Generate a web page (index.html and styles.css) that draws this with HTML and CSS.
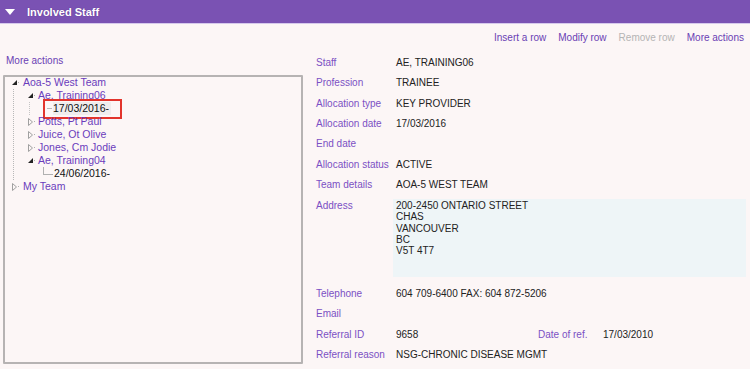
FILE: index.html
```html
<!DOCTYPE html>
<html>
<head>
<meta charset="utf-8">
<link rel="stylesheet" href="styles.css">
</head>
<body>
<div class="panel">
  <div class="hdr">
    <svg class="caret" width="10" height="6" viewBox="0 0 10 6"><path d="M0 0 H10 L5 6 Z" fill="#fff"/></svg>
    <span class="title">Involved Staff</span>
  </div>
  <div class="toolbar">
    <a>Insert a row</a>
    <a>Modify row</a>
    <a class="dis">Remove row</a>
    <a>More actions</a>
  </div>
  <div class="main">
    <div class="left">
      <a class="more">More actions</a>
      <div class="treebox">
        <div class="node n0">
          <svg class="tw" width="5" height="5" viewBox="0 0 5 5"><path d="M5 0 V5 H0 Z" fill="#222"/></svg><span class="dot"></span><a class="lbl">Aoa-5 West Team</a>
        </div>
        <div class="kids k0">
          <div class="node n1">
            <svg class="tw" width="5" height="5" viewBox="0 0 5 5"><path d="M5 0 V5 H0 Z" fill="#222"/></svg><span class="dot"></span><a class="lbl">Ae, Training06</a>
          </div>
          <div class="kids k1">
            <div class="node n2a">
              <span class="sel"><span class="dash"></span><span class="date">17/03/2016-</span></span>
            </div>
          </div>
          <div class="node n1">
            <svg class="tw" width="5" height="8" viewBox="0 0 5 8"><path d="M0.5 0.5 L4.5 4 L0.5 7.5 Z" fill="none" stroke="#a0a0a0"/></svg><span class="dot"></span><a class="lbl">Potts, Pt Paul</a>
          </div>
          <div class="node n1">
            <svg class="tw" width="5" height="8" viewBox="0 0 5 8"><path d="M0.5 0.5 L4.5 4 L0.5 7.5 Z" fill="none" stroke="#a0a0a0"/></svg><span class="dot"></span><a class="lbl">Juice, Ot Olive</a>
          </div>
          <div class="node n1">
            <svg class="tw" width="5" height="8" viewBox="0 0 5 8"><path d="M0.5 0.5 L4.5 4 L0.5 7.5 Z" fill="none" stroke="#a0a0a0"/></svg><span class="dot"></span><a class="lbl">Jones, Cm Jodie</a>
          </div>
          <div class="node n1">
            <svg class="tw" width="5" height="5" viewBox="0 0 5 5"><path d="M5 0 V5 H0 Z" fill="#222"/></svg><span class="dot"></span><a class="lbl">Ae, Training04</a>
          </div>
          <div class="node n2b">
            <span class="ell"></span><span class="date">24/06/2016-</span>
          </div>
        </div>
        <div class="node n0">
          <svg class="tw" width="5" height="8" viewBox="0 0 5 8"><path d="M0.5 0.5 L4.5 4 L0.5 7.5 Z" fill="none" stroke="#a0a0a0"/></svg><span class="dot"></span><a class="lbl">My Team</a>
        </div>
      </div>
    </div>
    <div class="details">
      <div class="row"><span class="lab">Staff</span><span class="val">AE, TRAINING06</span></div>
      <div class="row"><span class="lab">Profession</span><span class="val">TRAINEE</span></div>
      <div class="row"><span class="lab">Allocation type</span><span class="val">KEY PROVIDER</span></div>
      <div class="row"><span class="lab">Allocation date</span><span class="val">17/03/2016</span></div>
      <div class="row"><span class="lab">End date</span><span class="val"></span></div>
      <div class="row"><span class="lab">Allocation status</span><span class="val">ACTIVE</span></div>
      <div class="row"><span class="lab">Team details</span><span class="val">AOA-5 WEST TEAM</span></div>
      <div class="row addr"><span class="lab">Address</span><div class="addrbox">200-2450 ONTARIO STREET<br>CHAS<br>VANCOUVER<br>BC<br>V5T 4T7</div></div>
      <div class="row"><span class="lab">Telephone</span><span class="val">604 709-6400 FAX: 604 872-5206</span></div>
      <div class="row"><span class="lab">Email</span><span class="val"></span></div>
      <div class="row"><span class="lab">Referral ID</span><span class="val v1">9658</span><span class="lab l2">Date of ref.</span><span class="val">17/03/2010</span></div>
      <div class="row"><span class="lab">Referral reason</span><span class="val">NSG-CHRONIC DISEASE MGMT</span></div>
    </div>
  </div>
</div>
</body>
</html>
```
FILE: styles.css
```css
html, body {
  margin: 0;
  padding: 0;
  background: #fcf6f6;
}
body {
  font-family: "Liberation Sans", Arial, sans-serif;
  font-size: 10px;
  color: #222;
  width: 750px;
  height: 369px;
  overflow: hidden;
}
a { cursor: pointer; }

.hdr {
  height: 23px;
  background: #7a52b3;
  border-bottom: 1px solid #d6c9ec;
  display: flex;
  align-items: center;
}
.caret {
  margin-left: 5px;
  margin-top: 1px;
}
.title {
  margin-left: 12px;
  color: #fff;
  font-weight: bold;
  font-size: 11px;
  text-shadow: 0 0 1px rgba(60,30,100,0.5);
}

.toolbar {
  height: 26px;
  display: flex;
  justify-content: flex-end;
  align-items: center;
  gap: 12px;
  padding-right: 6px;
}
.toolbar a {
  color: #6a40b4;
  font-size: 10px;
}
.toolbar a.dis { color: #b4b4b4; }

.main {
  display: flex;
  align-items: flex-start;
}
.left {
  width: 300px;
  margin-left: 3px;
  padding-top: 4px;
}
.more {
  display: block;
  color: #6a40b4;
  line-height: 13px;
  margin-left: 3px;
  height: 13px;
}
.treebox {
  margin-top: 8px;
  height: 285px;
  border: 2px solid #b6b3b3;
  border-radius: 1px;
  font-size: 10.5px;
}

.node {
  height: 13px;
  line-height: 13px;
  display: flex;
  align-items: center;
  white-space: nowrap;
}
.treebox > .node:first-child { margin-top: -1px; }
.node .lbl { color: #6a3cbc; }
.tw { flex: none; display: block; }
.dot {
  width: 1px;
  height: 1px;
  background: #b0b0b0;
  margin: 0 3px 0 2px;
  flex: none;
}
.n0 { padding-left: 7px; }
.n0 .dot { margin: 0 4px 0 1px; }
.kids {
  border-left: 1px dotted #b8b8b8;
}
.k0 {
  margin-left: 8px;
}
.n1 { padding-left: 14px; }
.n1 .dot { margin: 0 3px 0 1px; }
.k1 {
  margin-left: 15px;
  border-left-color: #c4c4c4;
}
.n2a { padding-left: 16px; }
.sel {
  display: flex;
  align-items: center;
  height: 14px;
  width: 73px;
  outline: 2px solid #e2342c;
  outline-offset: 1px;
}
.dash {
  width: 5px;
  height: 1px;
  background: #b8b8b8;
  margin-left: 1px;
  margin-right: 1px;
  flex: none;
}
.date {
  color: #111;
}
.n2a .date {
  background: #f0eded;
  padding-right: 2px;
}
.n2b { padding-left: 29px; }
.ell {
  width: 9px;
  height: 7px;
  border-left: 1px solid #b0b0b0;
  border-bottom: 1px solid #b0b0b0;
  margin-top: -6px;
  margin-right: 1px;
  flex: none;
}

.details {
  margin-left: 13px;
  width: 430px;
  padding-top: 3px;
}
.row {
  display: flex;
  height: 20.33px;
  line-height: 20.33px;
  white-space: nowrap;
}
.lab {
  width: 80px;
  flex: none;
  color: #7b50c4;
}
.val { color: #222; }
.v1 { width: 142px; flex: none; }
.l2 { width: 65px; }
.row.addr {
  height: 78px;
  line-height: 11.3px;
  margin-top: 3.7px;
  margin-bottom: 7px;
}
.addr .lab { padding-top: 1px; }
.addrbox {
  margin-left: -3px;
  width: 347px;
  height: 76px;
  padding: 1px 3px;
  background: #eef5f7;
  color: #222;
}
```
